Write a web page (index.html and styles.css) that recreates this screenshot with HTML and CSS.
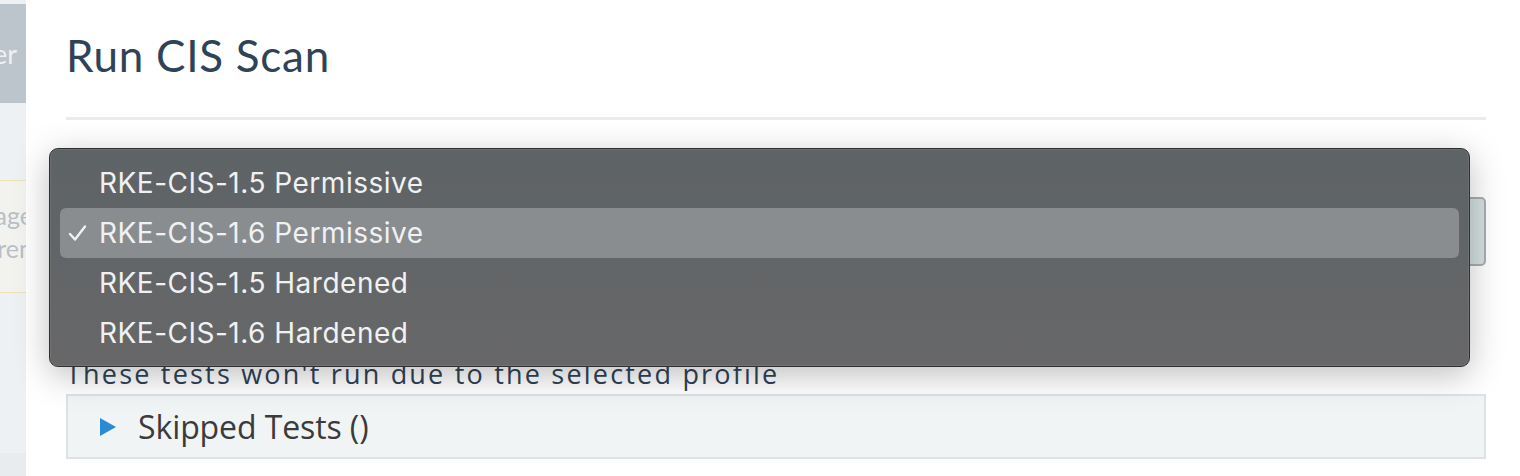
FILE: index.html
```html
<!DOCTYPE html>
<html lang="en">
<head>
<meta charset="utf-8">
<title>Run CIS Scan</title>
<link rel="stylesheet" href="styles.css">
</head>
<body>
<div class="app">
  <aside class="sidebar">
    <div class="nav-block"><span>er</span></div>
    <div class="notice">
      <div class="notice-line">age</div>
      <div class="notice-line">ren</div>
    </div>
    <div class="side-foot"></div>
  </aside>
  <main class="panel">
    <h1 class="title">Run CIS Scan</h1>
    <div class="divider"></div>
    <div class="field">
      <div class="select-box"></div>
    </div>
    <p class="note">These tests won't run due to the selected profile</p>
    <div class="accordion">
      <span class="caret"></span>
      <span class="acc-label">Skipped Tests ()</span>
    </div>
  </main>
</div>
<div class="popup" role="listbox">
  <div class="opt"><span class="check"></span>RKE-CIS-1.5 Permissive</div>
  <div class="opt selected"><span class="check"><svg width="20" height="18" viewBox="0 0 20 18"><polyline points="2,10 7,15.5 17,2.5" fill="none" stroke="#f2f2f2" stroke-width="2.4" stroke-linecap="round" stroke-linejoin="round"/></svg></span>RKE-CIS-1.6 Permissive</div>
  <div class="opt"><span class="check"></span>RKE-CIS-1.5 Hardened</div>
  <div class="opt"><span class="check"></span>RKE-CIS-1.6 Hardened</div>
</div>
</body>
</html>
```
FILE: styles.css
```css
* { box-sizing: border-box; }
html, body { margin: 0; padding: 0; }
body {
  width: 1520px;
  height: 476px;
  overflow: hidden;
  background: #ffffff;
  font-family: Lato, "Open Sans", sans-serif;
  position: relative;
}
.app {
  display: flex;
  height: 476px;
}
.sidebar {
  width: 26px;
  flex: none;
  background: #eef1f3;
  display: flex;
  flex-direction: column;
  overflow: hidden;
  padding-top: 4px;
}
.nav-block {
  height: 99px;
  background: #bcc4cc;
  display: flex;
  align-items: center;
  justify-content: flex-end;
  overflow: hidden;
}
.nav-block span {
  font-size: 27px;
  color: #eef1f4;
  margin-right: 9px;
  white-space: nowrap;
}
.notice {
  margin-top: 77px;
  height: 113px;
  border-top: 1px solid #ece2b8;
  border-bottom: 1px solid #ece2b8;
  background: #f2f3ef;
  display: flex;
  flex-direction: column;
  align-items: flex-end;
  padding-top: 18px;
  overflow: hidden;
}
.notice-line {
  font-size: 25px;
  color: #b8bfc8;
  line-height: 33px;
  margin-right: -7px;
  white-space: nowrap;
}
.side-foot {
  margin-top: auto;
  height: 23px;
  background: #e9ecef;
}
.panel {
  flex: 1;
  padding: 28px 34px 0 40px;
  background: #ffffff;
}
.title {
  margin: 0;
  font-weight: 400;
  font-size: 44px;
  line-height: 54px;
  color: #2e4358;
  letter-spacing: 0.75px;
}
.divider {
  margin-top: 35px;
  height: 3px;
  background: #e8eced;
}
.field {
  margin-top: 77px;
}
.select-box {
  height: 69px;
  border: 2px solid #a9adb0;
  border-radius: 5px;
  background: #d6e0e1;
}
.note {
  margin: 95px 0 0 0;
  font-family: "Open Sans", sans-serif;
  font-size: 27px;
  line-height: 26px;
  color: #2e4358;
  height: 24px;
  white-space: nowrap;
  letter-spacing: 2.2px;
}
.accordion {
  margin-top: 9px;
  height: 65px;
  border: 2px solid #dce3e4;
  background: #f1f4f5;
  display: flex;
  align-items: center;
  padding-left: 32px;
}
.caret {
  width: 0;
  height: 0;
  border-top: 9.5px solid transparent;
  border-bottom: 9.5px solid transparent;
  border-left: 16px solid #2a8bd5;
  margin-right: 22px;
}
.acc-label {
  font-family: "Open Sans", sans-serif;
  font-size: 32px;
  color: #3b3b3b;
  letter-spacing: -0.1px;
}
.popup {
  position: absolute;
  left: 49px;
  top: 148px;
  width: 1421px;
  height: 219px;
  border: 1px solid #2e2f30;
  border-radius: 9px;
  background: linear-gradient(180deg, #5e6366 0%, #626567 50%, #676768 100%);
  box-shadow: inset 0 0 0 1px rgba(255,255,255,0.08), 0 8px 34px rgba(0,0,0,0.26);
  padding: 9px 10px 0 10px;
  font-family: Inter, "Liberation Sans", sans-serif;
}
.opt {
  height: 50px;
  display: flex;
  align-items: center;
  font-size: 28px;
  color: #f1f1f1;
  border-radius: 6px;
  padding-left: 8px;
  letter-spacing: 0.5px;
}
.opt.selected {
  background: #898d90;
}
.check {
  width: 31px;
  height: 20px;
  display: flex;
  align-items: center;
}
```
